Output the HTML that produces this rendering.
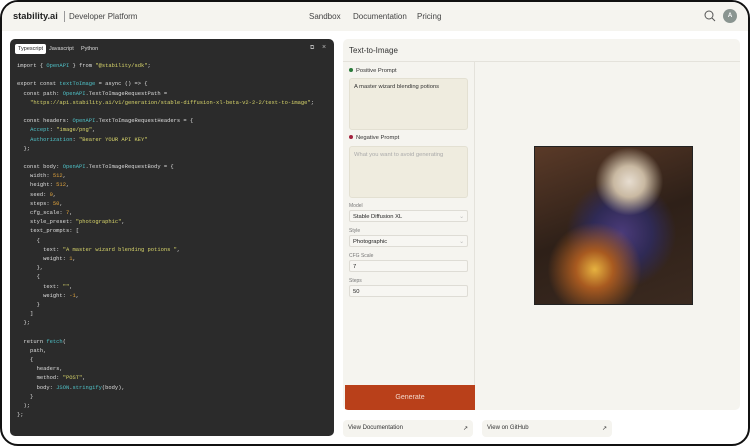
<!DOCTYPE html>
<html><head><meta charset="utf-8"><style>
*{box-sizing:border-box;margin:0;padding:0}
body{width:750px;height:446px;background:#fff;font-family:"Liberation Sans",sans-serif;overflow:hidden;position:relative}
.frame{position:absolute;left:0;top:0;width:750px;height:446px;border:2px solid #111;border-radius:18px;background:#fff;overflow:hidden}
.hdr{position:absolute;left:0;top:0;width:746px;height:29px;background:#f5f4ef}
.logo{position:absolute;left:11px;top:9px;font-weight:bold;font-size:9.3px;color:#222}
.sep{position:absolute;left:62px;top:9px;width:1px;height:11px;background:#999}
.dp{position:absolute;left:67px;top:10px;font-size:8px;color:#444}
.nav{position:absolute;top:10px;font-size:8px;color:#444}
.code{position:absolute;left:8px;top:37px;width:324px;height:397px;background:#2b2b2b;border-radius:5px}
.tab{position:absolute;top:5px;font-size:5.5px;color:#ddd;padding:2px 3px}
.tab.a{background:#fff;color:#222;border-radius:2px}
pre{position:absolute;left:7px;top:22px;font-family:"Liberation Mono",monospace;font-size:5.45px;line-height:9.18px;color:#ddd}
.k{color:#4fc0c6}.s{color:#d7d46a}.n{color:#e0a33c}
.card{position:absolute;left:341px;top:37px;width:397px;height:371px;background:#f5f4ef;border-radius:5px;overflow:hidden}
.ct{position:absolute;left:6px;top:7px;font-size:8px;color:#333}
.hl{position:absolute;left:0;top:22px;width:397px;height:1px;background:#e4e2db}
.vl{position:absolute;left:131px;top:23px;width:1px;height:348px;background:#e4e2db}
.lbl{position:absolute;left:6px;font-size:5.8px;color:#333}
.dot{display:inline-block;width:4px;height:4px;border-radius:50%;margin-right:3px;vertical-align:middle}
.ta{position:absolute;left:6px;width:119px;height:52px;background:#efecdf;border:1px solid #e3e0d2;border-radius:3px;font-size:5.8px;padding:5px 4px;color:#333}
.fl{position:absolute;left:6px;font-size:5px;color:#777}
.in{position:absolute;left:6px;width:119px;height:12px;background:#f7f6f2;border:1px solid #dedcd5;border-radius:2px;font-size:5.8px;padding:3px 3px;color:#222}
.gen{position:absolute;left:2px;top:346px;width:130px;height:26px;background:#b9401a;color:#f3d6c9;font-size:7px;text-align:center;line-height:26px}
.img{position:absolute;left:191px;top:107px;width:159px;height:159px;background:radial-gradient(circle at 38% 78%,#e6b240 0,#a85a20 12%,transparent 30%),radial-gradient(circle at 60% 22%,#e7ddd0 0,#c9b9a2 10%,transparent 22%),radial-gradient(circle at 55% 55%,#4b3b7a 0,#2f2a55 25%,transparent 45%),linear-gradient(160deg,#5a3a28,#2e2018 50%,#3b2a20);border:1px solid #222}
.bb{position:absolute;top:418px;height:17px;background:#f5f4ef;border-radius:4px;font-size:6px;color:#333;padding:5px 5px}
</style></head><body><div class="frame">
<div class="hdr">
<div class="logo">stability.ai</div><div class="sep"></div><div class="dp">Developer Platform</div>
<div class="nav" style="left:307px">Sandbox</div><div class="nav" style="left:351px">Documentation</div><div class="nav" style="left:415px">Pricing</div>
<svg style="position:absolute;left:702px;top:8px" width="12" height="12" viewBox="0 0 12 12"><circle cx="5" cy="5" r="4" fill="none" stroke="#555" stroke-width="1"/><path d="M8 8l3 3" stroke="#555"/></svg>
<div style="position:absolute;left:721px;top:7px;width:14px;height:14px;border-radius:50%;background:#8a9590;color:#fff;font-size:6px;font-weight:bold;text-align:center;line-height:14px">A</div>
</div>
<div class="code">
<div class="tab a" style="left:5px">Typescript</div><div class="tab" style="left:36px">Javascript</div><div class="tab" style="left:68px">Python</div>
<div style="position:absolute;left:300px;top:6px;color:#bbb;font-size:6px">⧉</div><div style="position:absolute;left:312px;top:5px;color:#bbb;font-size:7px">×</div>
<pre>import { <span class="k">OpenAPI</span> } from <span class="s">"@stability/sdk"</span>;

export const <span class="k">textToImage</span> = async () =&gt; {
  const path: <span class="k">OpenAPI</span>.TextToImageRequestPath =
    <span class="s">"https://api.stability.ai/v1/generation/stable-diffusion-xl-beta-v2-2-2/text-to-image"</span>;

  const headers: <span class="k">OpenAPI</span>.TextToImageRequestHeaders = {
    <span class="k">Accept</span>: <span class="s">"image/png"</span>,
    <span class="k">Authorization</span>: <span class="s">"Bearer YOUR API KEY"</span>
  };

  const body: <span class="k">OpenAPI</span>.TextToImageRequestBody = {
    width: <span class="n">512</span>,
    height: <span class="n">512</span>,
    seed: <span class="n">0</span>,
    steps: <span class="n">50</span>,
    cfg_scale: <span class="n">7</span>,
    style_preset: <span class="s">"photographic"</span>,
    text_prompts: [
      {
        text: <span class="s">"A master wizard blending potions "</span>,
        weight: <span class="n">1</span>,
      },
      {
        text: <span class="s">""</span>,
        weight: <span class="n">-1</span>,
      }
    ]
  };

  return <span class="k">fetch</span>(
    path,
    {
      headers,
      method: <span class="s">"POST"</span>,
      body: <span class="k">JSON</span>.<span class="k">stringify</span>(body),
    }
  );
};</pre>
</div>
<div class="card">
<div class="ct">Text-to-Image</div><div class="hl"></div><div class="vl"></div>
<div class="lbl" style="top:29px"><span class="dot" style="background:#2a7a3a"></span>Positive Prompt</div>
<div class="ta" style="top:39px">A master wizard blending potions</div>
<div class="lbl" style="top:96px"><span class="dot" style="background:#a3223e"></span>Negative Prompt</div>
<div class="ta" style="top:107px;color:#aaa">What you want to avoid generating</div>
<div class="fl" style="top:164px">Model</div><div class="in" style="top:171px">Stable Diffusion XL<span style="float:right;color:#bbb">⌄</span></div>
<div class="fl" style="top:189px">Style</div><div class="in" style="top:196px">Photographic<span style="float:right;color:#bbb">⌄</span></div>
<div class="fl" style="top:214px">CFG Scale</div><div class="in" style="top:221px">7</div>
<div class="fl" style="top:239px">Steps</div><div class="in" style="top:246px">50</div>
<div class="gen">Generate</div>
<div class="img"></div>
</div>
<div class="bb" style="left:341px;width:130px">View Documentation<span style="float:right">↗</span></div>
<div class="bb" style="left:480px;width:130px">View on GitHub<span style="float:right">↗</span></div>
</div></body></html>
